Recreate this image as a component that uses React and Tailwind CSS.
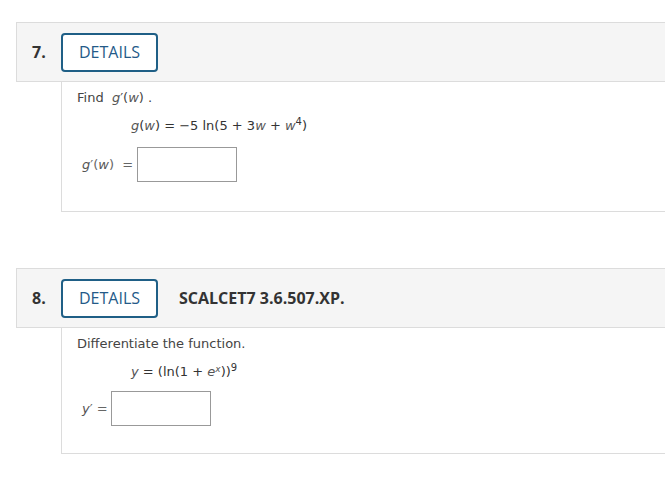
import React from "react";

const sans = { fontFamily: '"Open Sans", "Liberation Sans", sans-serif' };
const verdana = { fontFamily: '"DejaVu Sans", Verdana, sans-serif' };

function Header({ num, tag }) {
  return (
    <div
      className="ml-[16px] h-[60px] flex items-center bg-[#f5f5f5] border-y border-l border-[#dcdcdc] pl-[15px]"
      style={sans}
    >
      <span className="w-[29px] text-[16px] font-bold text-[#333]">{num}</span>
      <button className="w-[97px] h-[39px] border-2 border-[#1f5f86] rounded-[4px] bg-white text-[16px] font-medium text-[#245a88]">
        DETAILS
      </button>
      {tag && (
        <span className="ml-[21px] text-[16px] font-bold text-[#333]">{tag}</span>
      )}
    </div>
  );
}

function V({ children }) {
  return <i className="text-[#555]">{children}</i>;
}

export default function App() {
  return (
    <div className="w-[665px] h-[496px] bg-white overflow-hidden pt-[22px]" style={verdana}>
      {/* Question 7 */}
      <Header num="7." />
      <div className="ml-[61px] h-[130px] border-l border-b border-[#dcdcdc] pl-[15px] pt-[8px] text-[13px] text-[#444]">
        <div className="h-[16px] leading-[16px]">
          Find&nbsp; <V>g</V>′(<V>w</V>) .
        </div>
        <div className="mt-[12px] ml-[54px] h-[16px] leading-[16px] text-[#333]">
          <V>g</V>(<V>w</V>) = −5 ln(5 + 3<V>w</V> + <V>w</V>
          <sup className="text-[10px]">4</sup>)
        </div>
        <div className="mt-[13px] flex items-center">
          <span className="ml-[5px] w-[55px] text-[#666]">
            <V>g</V>′(<V>w</V>)&nbsp; =
          </span>
          <div className="w-[100px] h-[35px] border border-[#999] bg-white"></div>
        </div>
      </div>

      {/* Question 8 */}
      <div className="mt-[56px]">
        <Header num="8." tag="SCALCET7 3.6.507.XP." />
        <div className="ml-[61px] h-[126px] border-l border-b border-[#dcdcdc] pl-[15px] pt-[8px] text-[13px] text-[#444]">
          <div className="h-[16px] leading-[16px]">Differentiate the function.</div>
          <div className="mt-[12px] ml-[54px] h-[16px] leading-[16px] text-[#333]">
            <V>y</V> = (ln(1 + <V>e</V>
            <sup className="text-[9px]">
              <V>x</V>
            </sup>
            ))<sup className="text-[10px]">9</sup>
          </div>
          <div className="mt-[11px] flex items-center">
            <span className="ml-[5px] w-[29px] text-[#666]">
              <V>y</V>′ =
            </span>
            <div className="w-[100px] h-[35px] border border-[#999] bg-white"></div>
          </div>
        </div>
      </div>
    </div>
  );
}
